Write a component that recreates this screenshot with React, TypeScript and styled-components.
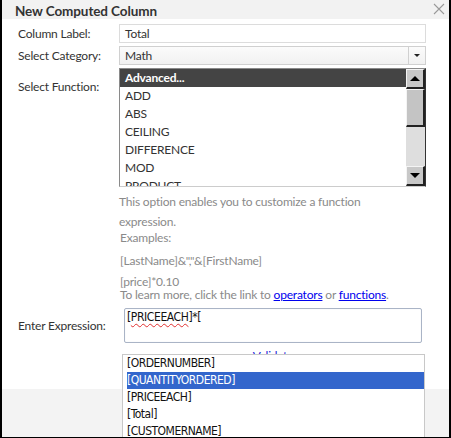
import React from "react";
import styled, { createGlobalStyle } from "styled-components";

const Global = createGlobalStyle`
  html, body { margin: 0; padding: 0; background: #fff; }
  * { box-sizing: border-box; }
`;

const SANS = `Lato, "Open Sans", "Noto Sans", sans-serif`;
const NARROW = `"DejaVu Sans Condensed", "Liberation Sans Narrow", Roboto, sans-serif`;

const Dialog = styled.div`
  position: relative;
  width: 451px;
  height: 438px;
  overflow: hidden;
  border-left: 2px solid #000;
  border-right: 2px solid #000;
  border-bottom: 1px solid #000;
  background: #fff;
  display: flex;
  flex-direction: column;
  font-family: ${SANS};
  font-size: 12px;
  letter-spacing: -0.2px;
  color: #333;
`;

const TitleBar = styled.div`
  height: 19px;
  flex: none;
  background: #f2f2f2;
  display: flex;
  align-items: center;
  justify-content: space-between;
  padding: 0 4px 0 13px;
`;

const Title = styled.div`
  font-weight: 700;
  font-size: 13.5px;
  letter-spacing: -0.1px;
  color: #333;
  line-height: 19px;
  padding-top: 3px;
`;

const Close = styled.svg`
  width: 12px;
  height: 12px;
  margin-top: -2px;
`;

const Content = styled.div`
  padding: 5px 0 0 16px;
  display: flex;
  flex-direction: column;
`;

const Row = styled.div<{ $top?: number; $align?: string }>`
  display: flex;
  align-items: ${(p) => p.$align ?? "center"};
  margin-top: ${(p) => p.$top ?? 0}px;
`;

const Label = styled.div<{ $pad?: number }>`
  width: 101px;
  flex: none;
  line-height: 16px;
  padding-top: ${(p) => p.$pad ?? 0}px;
  color: #333;
`;

const TextInput = styled.div`
  width: 307px;
  height: 19px;
  border: 1px solid #dcdcdc;
  padding-left: 5px;
  line-height: 17px;
  color: #333;
`;

const Select = styled.div`
  width: 307px;
  height: 19px;
  border: 1px solid #d0d0d0;
  background: linear-gradient(#fbfbfb, #f1f1f1);
  display: flex;
  line-height: 17px;
`;

const SelectValue = styled.div`
  flex: 1;
  padding-left: 5px;
`;

const SelectArrow = styled.div`
  width: 17px;
  border-left: 1px solid #d0d0d0;
  display: flex;
  align-items: center;
  justify-content: center;
  &::after {
    content: "";
    border-left: 3px solid transparent;
    border-right: 3px solid transparent;
    border-top: 3px solid #222;
  }
`;

const ListBox = styled.div`
  width: 307px;
  height: 119px;
  border: 1px solid #8a8a8a;
  border-right-color: #333;
  border-bottom-color: #ccc;
  display: flex;
  overflow: hidden;
`;

const ListItems = styled.div`
  flex: 1;
  overflow: hidden;
`;

const ListItem = styled.div<{ $selected?: boolean }>`
  height: 18px;
  line-height: 18px;
  padding-left: 5px;
  white-space: nowrap;
  background: ${(p) => (p.$selected ? "#444" : "transparent")};
  color: ${(p) => (p.$selected ? "#fff" : "#333")};
  font-weight: ${(p) => (p.$selected ? 700 : 400)};
`;

const ScrollBar = styled.div`
  width: 19px;
  flex: none;
  display: flex;
  flex-direction: column;
  background: #dedede;
`;

const ScrollButton = styled.div<{ $down?: boolean }>`
  height: 20px;
  flex: none;
  background: #c8c8c8;
  border-top: 1px solid #f4f4f4;
  border-left: 1px solid #f4f4f4;
  border-right: 2px solid #222;
  border-bottom: 2px solid #222;
  display: flex;
  align-items: center;
  justify-content: center;
  margin-top: ${(p) => (p.$down ? "auto" : "0")};
  &::after {
    content: "";
    border-left: 5px solid transparent;
    border-right: 5px solid transparent;
    ${(p) => (p.$down ? "border-top: 5px solid #000;" : "border-bottom: 5px solid #000;")}
  }
`;

const Thumb = styled.div`
  height: 38px;
  flex: none;
  background: #c4c4c4;
  border-top: 1px solid #f4f4f4;
  border-left: 1px solid #f4f4f4;
  border-right: 2px solid #222;
  border-bottom: 2px solid #222;
`;

const Help = styled.div`
  margin: 5px 0 0 101px;
  color: #8a8a8a;
`;

const HelpPara = styled.div`
  max-width: 285px;
  line-height: 20px;
`;

const HelpLine = styled.div<{ $top: number; $lh: number }>`
  margin-top: ${(p) => p.$top}px;
  line-height: ${(p) => p.$lh}px;
  padding-left: 1px;
  white-space: nowrap;
`;

const Link = styled.a`
  color: #0000ee;
  text-decoration: underline;
`;

const ExpressionBox = styled.div`
  margin-left: 5px;
  width: 298px;
  height: 35px;
  border: 1px solid #aab4c6;
  border-radius: 2px;
  box-shadow: inset 0 0 1px #d8dfea;
  padding: 1px 2px;
  font-family: ${NARROW};
  font-size: 12px;
  letter-spacing: -0.4px;
  line-height: 15px;
  color: #111;
`;

const Misspelled = styled.span`
  text-decoration: underline wavy #e03030;
  text-decoration-thickness: 1px;
  text-underline-offset: 2px;
`;

const Validate = styled.div`
  margin: 6px 0 0 106px;
  width: 298px;
  text-align: center;
  line-height: 14px;
  font-size: 12px;
  color: #2626d8;
  text-decoration: underline;
`;

const Footer = styled.div`
  margin-top: auto;
  height: 48px;
  flex: none;
  background: #f3f3f3;
`;

const Popup = styled.div`
  position: absolute;
  left: 120px;
  top: 354px;
  width: 303px;
  height: 100px;
  border: 1px solid #c8c8c8;
  background: #fff;
  padding: 0 0 0 4px;
  font-family: ${NARROW};
  font-size: 12px;
  letter-spacing: -0.5px;
  color: #111;
`;

const PopupItem = styled.div<{ $active?: boolean }>`
  height: 17px;
  line-height: 17px;
  white-space: nowrap;
  background: ${(p) => (p.$active ? "#3366cc" : "transparent")};
  color: ${(p) => (p.$active ? "#fff" : "#111")};
`;

const functions = ["ADD", "ABS", "CEILING", "DIFFERENCE", "MOD", "PRODUCT"];
const columns = ["[ORDERNUMBER]", "[QUANTITYORDERED]", "[PRICEEACH]", "[Total]", "[CUSTOMERNAME]"];

export default function App() {
  return (
    <>
      <Global />
      <Dialog>
        <TitleBar>
          <Title>New Computed Column</Title>
          <Close viewBox="0 0 12 12">
            <path d="M1 1 L11 11 M11 1 L1 11" stroke="#9a9a9a" strokeWidth="1.1" fill="none" />
          </Close>
        </TitleBar>
        <Content>
          <Row>
            <Label>Column Label:</Label>
            <TextInput>Total</TextInput>
          </Row>
          <Row $top={3}>
            <Label>Select Category:</Label>
            <Select>
              <SelectValue>Math</SelectValue>
              <SelectArrow />
            </Select>
          </Row>
          <Row $top={3} $align="flex-start">
            <Label $pad={11}>Select Function:</Label>
            <ListBox>
              <ListItems>
                <ListItem $selected>Advanced...</ListItem>
                {functions.map((f) => (
                  <ListItem key={f}>{f}</ListItem>
                ))}
              </ListItems>
              <ScrollBar>
                <ScrollButton />
                <Thumb />
                <ScrollButton $down />
              </ScrollBar>
            </ListBox>
          </Row>
          <Help>
            <HelpPara>This option enables you to customize a function expression.</HelpPara>
            <HelpLine $top={-1} $lh={14}>Examples:</HelpLine>
            <HelpLine $top={9} $lh={14}>[LastName]&amp;","&amp;[FirstName]</HelpLine>
            <HelpLine $top={7} $lh={13}>[price]*0.10</HelpLine>
            <HelpLine $top={0} $lh={13}>
              To learn more, click the link to <Link>operators</Link> or <Link>functions</Link>.
            </HelpLine>
          </Help>
          <Row $top={7}>
            <Label>Enter Expression:</Label>
            <ExpressionBox>
              [<Misspelled>PRICEEACH</Misspelled>]*[
            </ExpressionBox>
          </Row>
          <Validate>Validate</Validate>
        </Content>
        <Footer />
        <Popup>
          {columns.map((c, i) => (
            <PopupItem key={c} $active={i === 1}>
              {c}
            </PopupItem>
          ))}
        </Popup>
      </Dialog>
    </>
  );
}
